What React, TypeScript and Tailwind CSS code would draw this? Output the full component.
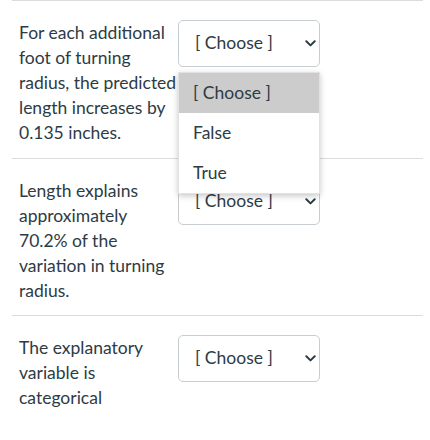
import React from 'react';

const Chevron = () => (
    <svg width="11" height="7" viewBox="0 0 11 7" className="shrink-0">
        <path d="M1.3 1.3 L5.5 5.4 L9.7 1.3" fill="none" stroke="#2d3b45" strokeWidth="2" strokeLinecap="round" strokeLinejoin="round" />
    </svg>
);

const Select: React.FC<{ open?: boolean }> = ({ open }) => (
    <div className="relative shrink-0 w-[142px]">
        <div className="h-[47px] w-full rounded-[5px] border border-[#c7cdd1] bg-white flex items-center justify-between pl-[16px] pr-[3px] text-[17.5px] text-[#2d3b45]">
            <span>[ Choose ]</span>
            <Chevron />
        </div>
        {open && (
            <ul className="absolute left-0 top-[52px] z-10 w-[142px] bg-white border border-[#e2e2e2] shadow-[0_2px_6px_rgba(0,0,0,0.22)] text-[17.5px] text-[#2d3b45]">
                <li className="h-10 flex items-center pl-[14px] bg-[#cccccc]">[ Choose ]</li>
                <li className="h-10 flex items-center pl-[14px]">False</li>
                <li className="h-10 flex items-center pl-[14px]">True</li>
            </ul>
        )}
    </div>
);

const rows = [
    { text: 'For each additional foot of turning radius, the predicted length increases by 0.135 inches.', open: true },
    { text: 'Length explains approximately 70.2% of the variation in turning radius.' },
    { text: 'The explanatory variable is categorical' },
];

export default function App() {
    return (
        <div className="w-[430px] h-[440px] bg-white pl-[12px] pr-[7px]" style={{ fontFamily: 'Lato, "Noto Sans", sans-serif' }}>
            {rows.map((row, i) => (
                <div key={i} className="flex items-start border-t border-[#dcdcdc] pt-[19px] pb-[12.5px] pl-[7px]">
                    <p className="w-[159px] text-[17.5px] leading-[25px] text-[#2d3b45]">{row.text}</p>
                    <Select open={row.open} />
                </div>
            ))}
        </div>
    );
}
